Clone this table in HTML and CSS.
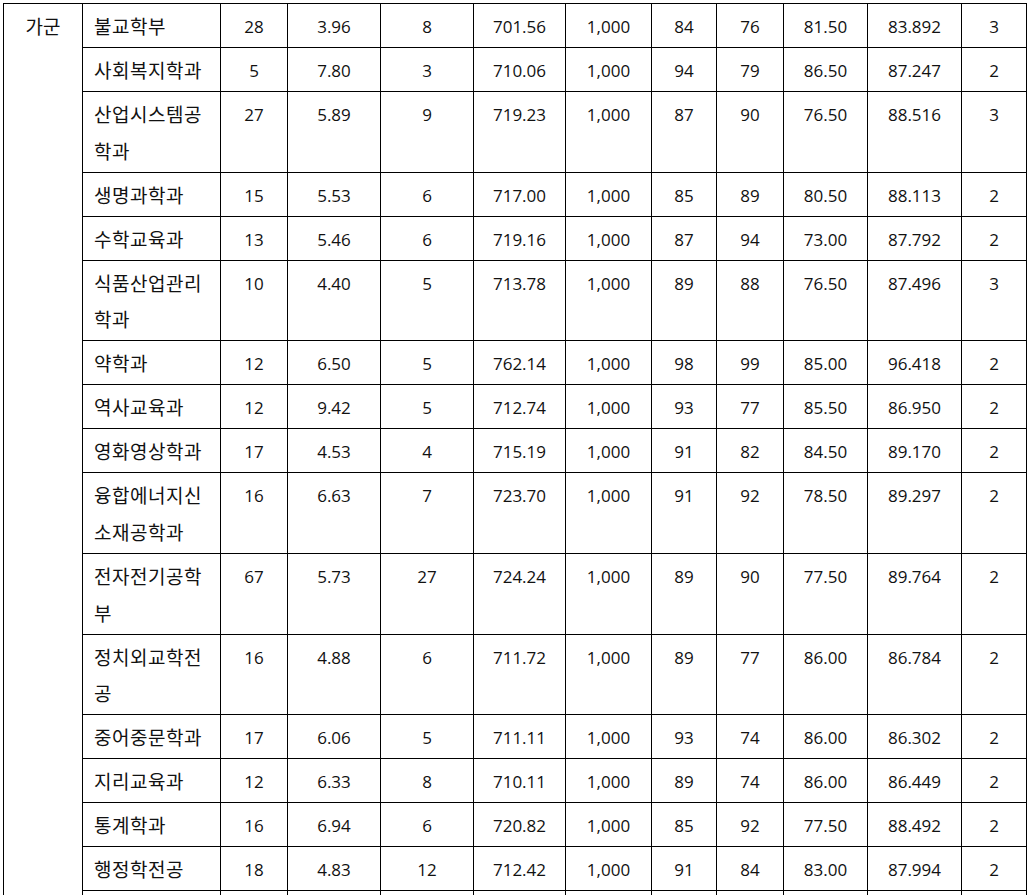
FILE: index.html
```html
<!DOCTYPE html>
<html lang="ko">
<head>
<meta charset="utf-8">
<title>가군 모집단위별 결과</title>
<link rel="stylesheet" href="styles.css">
</head>
<body>
<table class="result">
  <colgroup>
    <col class="c-group"><col class="c-name"><col class="c-n1"><col class="c-n2"><col class="c-n3">
    <col class="c-n4"><col class="c-n5"><col class="c-n6"><col class="c-n7"><col class="c-n8">
    <col class="c-n9"><col class="c-n10">
  </colgroup>
  <tbody>
    <tr><td class="group" rowspan="17">가군</td><td class="name">불교학부</td><td>28</td><td>3.96</td><td>8</td><td>701.56</td><td>1,000</td><td>84</td><td>76</td><td>81.50</td><td>83.892</td><td>3</td></tr>
    <tr><td class="name">사회복지학과</td><td>5</td><td>7.80</td><td>3</td><td>710.06</td><td>1,000</td><td>94</td><td>79</td><td>86.50</td><td>87.247</td><td>2</td></tr>
    <tr><td class="name">산업시스템공학과</td><td>27</td><td>5.89</td><td>9</td><td>719.23</td><td>1,000</td><td>87</td><td>90</td><td>76.50</td><td>88.516</td><td>3</td></tr>
    <tr><td class="name">생명과학과</td><td>15</td><td>5.53</td><td>6</td><td>717.00</td><td>1,000</td><td>85</td><td>89</td><td>80.50</td><td>88.113</td><td>2</td></tr>
    <tr><td class="name">수학교육과</td><td>13</td><td>5.46</td><td>6</td><td>719.16</td><td>1,000</td><td>87</td><td>94</td><td>73.00</td><td>87.792</td><td>2</td></tr>
    <tr><td class="name">식품산업관리학과</td><td>10</td><td>4.40</td><td>5</td><td>713.78</td><td>1,000</td><td>89</td><td>88</td><td>76.50</td><td>87.496</td><td>3</td></tr>
    <tr><td class="name">약학과</td><td>12</td><td>6.50</td><td>5</td><td>762.14</td><td>1,000</td><td>98</td><td>99</td><td>85.00</td><td>96.418</td><td>2</td></tr>
    <tr><td class="name">역사교육과</td><td>12</td><td>9.42</td><td>5</td><td>712.74</td><td>1,000</td><td>93</td><td>77</td><td>85.50</td><td>86.950</td><td>2</td></tr>
    <tr><td class="name">영화영상학과</td><td>17</td><td>4.53</td><td>4</td><td>715.19</td><td>1,000</td><td>91</td><td>82</td><td>84.50</td><td>89.170</td><td>2</td></tr>
    <tr><td class="name">융합에너지신소재공학과</td><td>16</td><td>6.63</td><td>7</td><td>723.70</td><td>1,000</td><td>91</td><td>92</td><td>78.50</td><td>89.297</td><td>2</td></tr>
    <tr><td class="name">전자전기공학부</td><td>67</td><td>5.73</td><td>27</td><td>724.24</td><td>1,000</td><td>89</td><td>90</td><td>77.50</td><td>89.764</td><td>2</td></tr>
    <tr><td class="name">정치외교학전공</td><td>16</td><td>4.88</td><td>6</td><td>711.72</td><td>1,000</td><td>89</td><td>77</td><td>86.00</td><td>86.784</td><td>2</td></tr>
    <tr><td class="name">중어중문학과</td><td>17</td><td>6.06</td><td>5</td><td>711.11</td><td>1,000</td><td>93</td><td>74</td><td>86.00</td><td>86.302</td><td>2</td></tr>
    <tr><td class="name">지리교육과</td><td>12</td><td>6.33</td><td>8</td><td>710.11</td><td>1,000</td><td>89</td><td>74</td><td>86.00</td><td>86.449</td><td>2</td></tr>
    <tr><td class="name">통계학과</td><td>16</td><td>6.94</td><td>6</td><td>720.82</td><td>1,000</td><td>85</td><td>92</td><td>77.50</td><td>88.492</td><td>2</td></tr>
    <tr><td class="name">행정학전공</td><td>18</td><td>4.83</td><td>12</td><td>712.42</td><td>1,000</td><td>91</td><td>84</td><td>83.00</td><td>87.994</td><td>2</td></tr>
    <tr><td class="name">&nbsp;</td><td>&nbsp;</td><td>&nbsp;</td><td>&nbsp;</td><td>&nbsp;</td><td>&nbsp;</td><td>&nbsp;</td><td>&nbsp;</td><td>&nbsp;</td><td>&nbsp;</td><td>&nbsp;</td></tr>
  </tbody>
</table>
</body>
</html>
```
FILE: styles.css
```css
html {
  overflow: hidden;
  background: #fff;
}
body {
  margin: 0;
  padding: 3px 0 0 3px;
  font-family: "Open Sans", "Noto Sans CJK KR", sans-serif;
  font-size: 17px;
  color: #111;
}
.result {
  table-layout: fixed;
  border-collapse: collapse;
  width: 1024px;
}
.c-group { width: 79px; }
.c-name { width: 138px; }
.c-n1 { width: 67px; }
.c-n2 { width: 93px; }
.c-n3 { width: 93px; }
.c-n4 { width: 92px; }
.c-n5 { width: 86px; }
.c-n6 { width: 65px; }
.c-n7 { width: 67px; }
.c-n8 { width: 84px; }
.c-n9 { width: 94px; }
.c-n10 { width: 65px; }
.result td {
  border: 1px solid #000;
  padding: 5px 6px 1.33px;
  line-height: 36.67px;
  text-align: center;
  vertical-align: top;
  white-space: nowrap;
}
.result td.name {
  text-align: left;
  padding-left: 11px;
  padding-right: 8px;
  white-space: normal;
  word-break: break-all;
  font-size: 19px;
  letter-spacing: 0.5px;
}
.result td.group {
  font-size: 19px;
  letter-spacing: 0;
}
```
